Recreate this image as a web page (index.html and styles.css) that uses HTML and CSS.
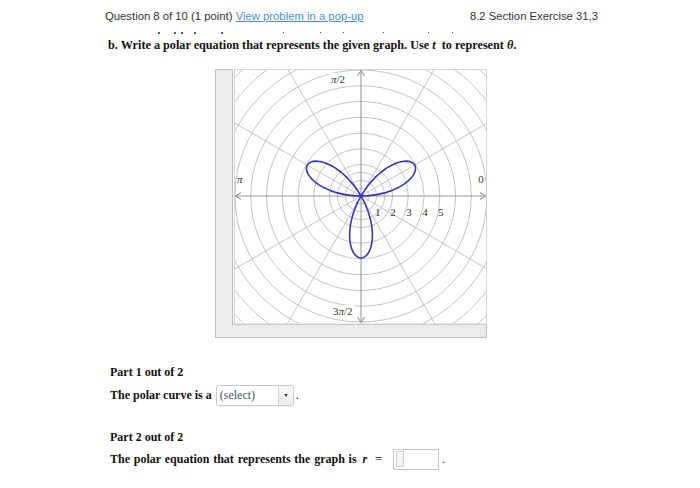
FILE: index.html
```html
<!DOCTYPE html>
<html>
<head>
<meta charset="utf-8">
<link rel="stylesheet" href="styles.css">
</head>
<body>
<div class="header">
  <div class="qinfo">Question 8 of 10 (1 point) <a class="popup" href="#">View problem in a pop-up</a></div>
  <div class="section">8.2 Section Exercise 31,3</div>
</div>
<svg class="dots" width="700" height="3" viewBox="0 0 700 3">
  <g fill="#555">
    <rect x="158" y="0" width="2" height="2"/>
    <rect x="174" y="0" width="2" height="2"/>
    <rect x="181" y="0" width="2" height="2"/>
    <rect x="194" y="0" width="2" height="2"/>
    <rect x="221" y="0" width="2" height="2"/>
    <rect x="283" y="0" width="1" height="1"/>
    <rect x="320" y="0" width="1" height="1"/>
    <rect x="343" y="0" width="1" height="1"/>
    <rect x="383" y="0" width="1" height="1"/>
    <rect x="428" y="0" width="1" height="1"/>
    <rect x="452" y="0" width="1" height="1"/>
  </g>
</svg>
<p class="prompt">b. Write a polar equation that represents the given graph. Use <i>t</i>&nbsp; to represent <i>θ</i>.</p>

<div class="figure">
<svg width="272" height="269" viewBox="0 0 272 269">
  <defs>
    <clipPath id="plot"><rect x="20" y="1" width="251.5" height="253.5"/></clipPath>
    <path id="petal" d="M0,0 L7.18,3.74 L14.54,6.78 L21.92,9.08 L29.13,10.6 L36,11.35 L42.35,11.35 L48.02,10.65 L52.88,9.32 L56.79,7.48 L59.66,5.22 L61.41,2.68 L62,0 L61.41,-2.68 L59.66,-5.22 L56.79,-7.48 L52.88,-9.32 L48.02,-10.65 L42.35,-11.35 L36,-11.35 L29.13,-10.6 L21.92,-9.08 L14.54,-6.78 L7.18,-3.74 Z"/>
  </defs>
  <polygon points="0.5,0.5 17.5,0.5 17.5,255.5 271.5,255.5 271.5,268.5 0.5,268.5" fill="#ebebeb" stroke="#bdbdbd"/>
  <rect x="19.5" y="0.5" width="252" height="254.5" fill="#fff" stroke="#d6d6d6"/>
  <g clip-path="url(#plot)" fill="none" stroke="#bcbcbc" stroke-width="0.9">
    <circle cx="146" cy="127" r="7.9"/>
    <circle cx="146" cy="127" r="15.75"/>
    <circle cx="146" cy="127" r="23.6"/>
    <circle cx="146" cy="127" r="31.5"/>
    <circle cx="146" cy="127" r="47.25"/>
    <circle cx="146" cy="127" r="63"/>
    <circle cx="146" cy="127" r="78.75"/>
    <circle cx="146" cy="127" r="94.5"/>
    <circle cx="146" cy="127" r="110.25"/>
    <circle cx="146" cy="127" r="126"/>
    <circle cx="146" cy="127" r="141.75"/>
    <circle cx="146" cy="127" r="157.5"/>
    <circle cx="146" cy="127" r="173.25"/>
    <line x1="-27.2" y1="227" x2="319.2" y2="27"/>
    <line x1="46" y1="300.2" x2="246" y2="-46.2"/>
    <line x1="246" y1="300.2" x2="46" y2="-46.2"/>
    <line x1="319.2" y1="227" x2="-27.2" y2="27"/>
  </g>
  <g fill="none" stroke="#9a9a9a" stroke-width="1.1">
    <line x1="20" y1="127" x2="271" y2="127"/>
    <line x1="146" y1="1.5" x2="146" y2="253.5"/>
    <polyline points="26,123.5 20.5,127 26,130.5"/>
    <polyline points="265,123.5 270.5,127 265,130.5"/>
    <polyline points="142.5,7 146,1.5 149.5,7"/>
    <polyline points="142.5,248 146,253.5 149.5,248"/>
  </g>
  <g fill="#fff">
    <rect x="114" y="4" width="20" height="12"/>
    <rect x="116" y="236" width="24" height="12"/>
  </g>
  <g class="lbl">
    <text x="116" y="14"><tspan font-style="italic">π</tspan>/2</text>
    <text x="118" y="246">3<tspan font-style="italic">π</tspan>/2</text>
    <text x="22" y="114" font-style="italic">π</text>
    <text x="266" y="114" text-anchor="middle">0</text>
    <text x="162.7" y="147" text-anchor="middle">1</text>
    <text x="178" y="147" text-anchor="middle">2</text>
    <text x="194" y="147" text-anchor="middle">3</text>
    <text x="210" y="147" text-anchor="middle">4</text>
    <text x="225.7" y="147" text-anchor="middle">5</text>
  </g>
  <g fill="none" stroke="#3535b5" stroke-width="1.6" stroke-linejoin="round">
    <use href="#petal" transform="translate(146 127) rotate(-30)"/>
    <use href="#petal" transform="translate(146 127) rotate(-150)"/>
    <use href="#petal" transform="translate(146 127) rotate(90)"/>
  </g>
</svg>
</div>

<div class="part part1">
  <div class="part-title">Part 1 out of 2</div>
  <div class="row">
    <span>The polar curve is a</span>
    <span class="select"><span class="select-text">(select)</span><span class="select-btn"><span class="caret"></span></span></span>
    <span class="period">.</span>
  </div>
</div>

<div class="part part2">
  <div class="part-title">Part 2 out of 2</div>
  <div class="row">
    <span class="eqtext">The polar equation that represents the graph is <i class="var">r</i><span class="eq">=</span></span>
    <span class="answer"><span class="answer-cursor"></span></span>
    <span class="period">.</span>
  </div>
</div>
</body>
</html>
```

FILE: styles.css
```css
html, body {
  margin: 0;
  padding: 0;
  background: #fff;
}
body {
  width: 700px;
  height: 488px;
  overflow: hidden;
  font-family: "Liberation Serif", "Times New Roman", serif;
  color: #111;
}
.header {
  display: flex;
  justify-content: space-between;
  padding: 9px 102px 0 105px;
  font-family: "Liberation Sans", Arial, sans-serif;
  font-size: 11.3px;
  line-height: 14px;
  color: #333;
}
.popup {
  color: #4a8fd6;
  text-decoration: underline;
}
.dots {
  display: block;
  margin-top: 9px;
}
.prompt {
  margin: 3px 0 0 0;
  padding-left: 108px;
  font-size: 12.2px;
  line-height: 15px;
  font-weight: bold;
}
.figure {
  margin-top: 16px;
  margin-left: 215px;
  width: 272px;
  height: 269px;
}
.figure svg {
  display: block;
}
.lbl {
  font-family: "Liberation Serif", "Times New Roman", serif;
  font-size: 11px;
  fill: #333;
}
.part {
  padding-left: 110px;
  font-size: 12px;
  font-weight: bold;
}
.part1 {
  margin-top: 27px;
}
.part2 {
  margin-top: 24px;
}
.part-title {
  line-height: 15px;
}
.row {
  display: flex;
  align-items: center;
  height: 22px;
  line-height: 15px;
}
.part1 .row {
  margin-top: 4px;
}
.part2 .row {
  margin-top: 3px;
}
.eqtext {
  word-spacing: 0.8px;
}
.var {
  margin-left: 2px;
}
.eq {
  margin-left: 8px;
  font-weight: normal;
}
.select {
  display: flex;
  align-items: stretch;
  margin-left: 4px;
  width: 76px;
  height: 19px;
  border: 1px solid #cbcbcb;
  border-radius: 3px;
  background: #fff;
  box-shadow: 0 1px 1px rgba(0,0,0,0.05);
}
.select-text {
  flex: 1;
  padding-left: 3px;
  font-weight: normal;
  color: #4d5566;
  font-size: 12px;
  line-height: 19px;
}
.select-btn {
  width: 14px;
  border-left: 1px solid #d4d4d4;
  background: linear-gradient(#fafafa, #ececec);
  border-radius: 0 3px 3px 0;
  display: flex;
  align-items: center;
  justify-content: center;
}
.caret {
  width: 0;
  height: 0;
  border-left: 2.5px solid transparent;
  border-right: 2.5px solid transparent;
  border-top: 3px solid #444;
}
.period {
  margin-left: 2px;
  font-weight: normal;
}
.answer {
  display: flex;
  align-items: center;
  margin-left: 11px;
  width: 44px;
  height: 19px;
  border: 1px solid #c4c4c4;
  background: #fff;
}
.answer-cursor {
  margin-left: 2px;
  width: 6px;
  height: 14px;
  border: 1px solid #cfcfcf;
  background: #f6f6f6;
}
.part2 .period {
  margin-left: 3px;
}
```
